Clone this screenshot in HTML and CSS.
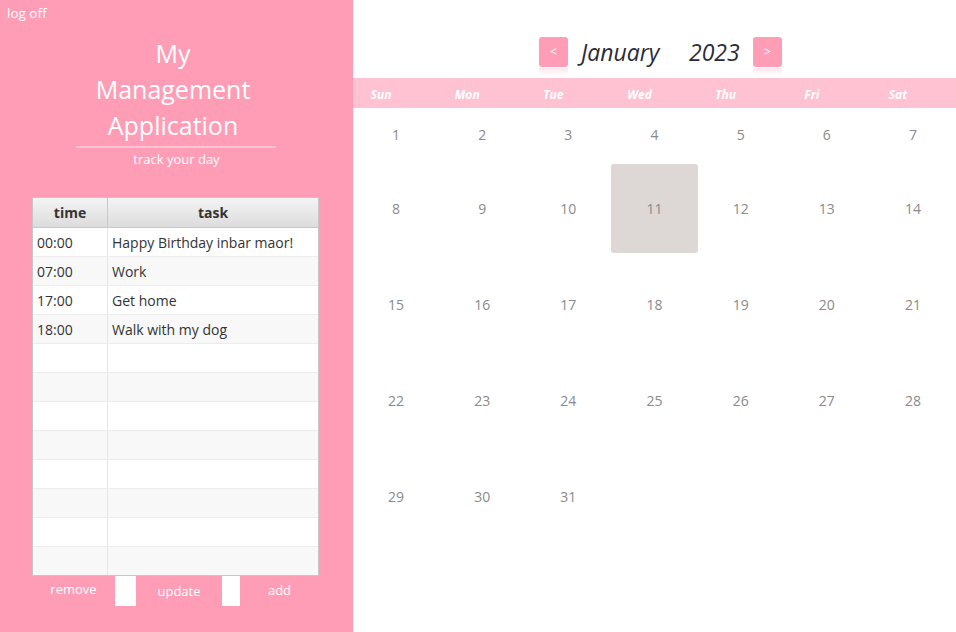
FILE: index.html
```html
<!DOCTYPE html>
<html>
<head>
<meta charset="utf-8">
<link rel="stylesheet" href="styles.css">
</head>
<body>
<div class="app">
  <aside class="side">
    <div class="logoff">log off</div>
    <div class="title-wrap">
      <h1 class="title">My<br>Management<br>Application</h1>
    </div>
    <div class="subtitle">track your day</div>
    <div class="table">
      <div class="thead">
        <div class="th c-time">time</div>
        <div class="th c-task">task</div>
      </div>
      <div class="row"><div class="td c-time">00:00</div><div class="td c-task">Happy Birthday inbar maor!</div></div>
      <div class="row alt"><div class="td c-time">07:00</div><div class="td c-task">Work</div></div>
      <div class="row"><div class="td c-time">17:00</div><div class="td c-task">Get home</div></div>
      <div class="row alt"><div class="td c-time">18:00</div><div class="td c-task">Walk with my dog</div></div>
      <div class="row"><div class="td c-time"></div><div class="td c-task"></div></div>
      <div class="row alt"><div class="td c-time"></div><div class="td c-task"></div></div>
      <div class="row"><div class="td c-time"></div><div class="td c-task"></div></div>
      <div class="row alt"><div class="td c-time"></div><div class="td c-task"></div></div>
      <div class="row"><div class="td c-time"></div><div class="td c-task"></div></div>
      <div class="row alt"><div class="td c-time"></div><div class="td c-task"></div></div>
      <div class="row"><div class="td c-time"></div><div class="td c-task"></div></div>
      <div class="row alt last"><div class="td c-time"></div><div class="td c-task"></div></div>
    </div>
    <div class="actions">
      <div class="btn btn-remove">remove</div>
      <div class="spacer s1"></div>
      <div class="btn btn-update">update</div>
      <div class="spacer s2"></div>
      <div class="btn btn-add">add</div>
    </div>
  </aside>
  <main class="cal">
    <div class="nav">
      <div class="navbtn">&lt;</div>
      <div class="month">January</div>
      <div class="year">2023</div>
      <div class="navbtn">&gt;</div>
    </div>
    <div class="dow">
      <div>Sun</div><div>Mon</div><div>Tue</div><div>Wed</div><div>Thu</div><div>Fri</div><div>Sat</div>
    </div>
    <div class="days">
      <div class="d">1</div><div class="d">2</div><div class="d">3</div><div class="d">4</div><div class="d">5</div><div class="d">6</div><div class="d">7</div>
      <div class="d">8</div><div class="d">9</div><div class="d">10</div><div class="d sel">11</div><div class="d">12</div><div class="d">13</div><div class="d">14</div>
      <div class="d">15</div><div class="d">16</div><div class="d">17</div><div class="d">18</div><div class="d">19</div><div class="d">20</div><div class="d">21</div>
      <div class="d">22</div><div class="d">23</div><div class="d">24</div><div class="d">25</div><div class="d">26</div><div class="d">27</div><div class="d">28</div>
      <div class="d">29</div><div class="d">30</div><div class="d">31</div><div class="d"></div><div class="d"></div><div class="d"></div><div class="d"></div>
    </div>
  </main>
</div>
</body>
</html>
```

FILE: styles.css
```css
* { box-sizing: border-box; }
html, body { margin: 0; padding: 0; }
body {
  width: 956px;
  height: 632px;
  overflow: hidden;
  font-family: "Open Sans", "Noto Sans", sans-serif;
  background: #ffffff;
}
.app {
  display: flex;
  width: 956px;
  height: 632px;
}
.side {
  width: 353px;
  height: 632px;
  background: #ff9db7;
  color: #ffffff;
  display: flex;
  flex-direction: column;
}
.logoff {
  font-size: 13.5px;
  line-height: 16px;
  padding: 5px 0 0 7px;
  height: 21px;
}
.title-wrap {
  margin: 14px 0 0 76px;
  width: 200px;
  border-bottom: 2px solid #ffc4d4;
  padding-bottom: 3px;
}
.title {
  margin: 0;
  font-weight: 400;
  font-size: 25px;
  line-height: 36px;
  text-align: center;
  margin-left: -6px;
  margin-right: 0;
}
.subtitle {
  font-size: 13px;
  line-height: 16px;
  text-align: center;
  margin-top: 3px;
  width: 353px;
}
.table {
  margin: 30px 0 0 32px;
  width: 287px;
  border: 1px solid #c6c6c6;
  background: #ffffff;
  color: #333333;
  font-size: 14px;
}
.thead {
  display: flex;
  height: 30px;
  background: linear-gradient(#f4f4f4, #dcdcdc);
  border-bottom: 1px solid #c8c8c8;
}
.th {
  font-weight: 700;
  text-align: center;
  line-height: 30px;
  font-size: 14px;
}
.thead .c-time { border-right: 1px solid #c8c8c8; }
.c-time { width: 75px; flex: none; }
.c-task { flex: 1; }
.row {
  display: flex;
  height: 29px;
  border-bottom: 1px solid #ededed;
  background: #ffffff;
}
.row.alt { background: #f8f8f8; }
.row.last { border-bottom: none; height: 28px; }
.td {
  line-height: 29px;
  padding-left: 4px;
  white-space: nowrap;
  overflow: hidden;
}
.row .c-time { border-right: 1px solid #e6e6e6; }
.actions {
  display: flex;
  margin-left: 32px;
  width: 287px;
  height: 30px;
}
.btn {
  font-size: 13px;
  text-align: center;
  color: #ffffff;
  background: #ff9db7;
}
.btn-remove { width: 83px; line-height: 27px; }
.btn-update { width: 86px; line-height: 28px; border-radius: 4px 4px 0 0; margin-top: 1px; height: 29px; }
.btn-add { width: 79px; line-height: 29px; }
.spacer { background: #ffffff; }
.s1 { width: 21px; }
.s2 { width: 18px; }

.cal {
  width: 603px;
  height: 632px;
  display: flex;
  flex-direction: column;
}
.nav {
  display: flex;
  align-items: flex-start;
  height: 78px;
  padding-left: 186px;
  padding-top: 37px;
  color: #2b2b38;
}
.navbtn {
  position: relative;
  width: 29px;
  height: 30px;
  border-radius: 3px;
  background: #ff9db7;
  color: #ffffff;
  font-size: 12px;
  line-height: 30px;
  text-align: center;
}
.navbtn::after {
  content: "";
  position: absolute;
  left: 0;
  top: 31px;
  width: 29px;
  height: 8px;
  background: linear-gradient(rgba(255,157,183,0.25), rgba(255,157,183,0));
}
.month, .year {
  font-style: italic;
  font-size: 23px;
  line-height: 30px;
}
.month { margin-left: 13px; width: 76px; }
.year { margin-left: 32px; width: 64px; }
.dow {
  display: grid;
  grid-template-columns: repeat(7, 1fr);
  height: 30px;
  background: #ffc2d2;
  color: #ffffff;
  font-weight: 700;
  font-style: italic;
  font-size: 12px;
  line-height: 30px;
  padding-top: 2px;
}
.dow div {
  text-align: center;
  padding-right: 30px;
}
.days {
  display: grid;
  grid-template-columns: repeat(7, 1fr);
  grid-template-rows: 46px repeat(4, 89px);
  row-gap: 7px;
  padding-top: 3px;
  color: #8a8a8a;
  font-size: 14px;
}
.d {
  display: flex;
  align-items: center;
  justify-content: center;
  border-radius: 3px;
}
.d.sel { background: #ddd8d5; }
```
